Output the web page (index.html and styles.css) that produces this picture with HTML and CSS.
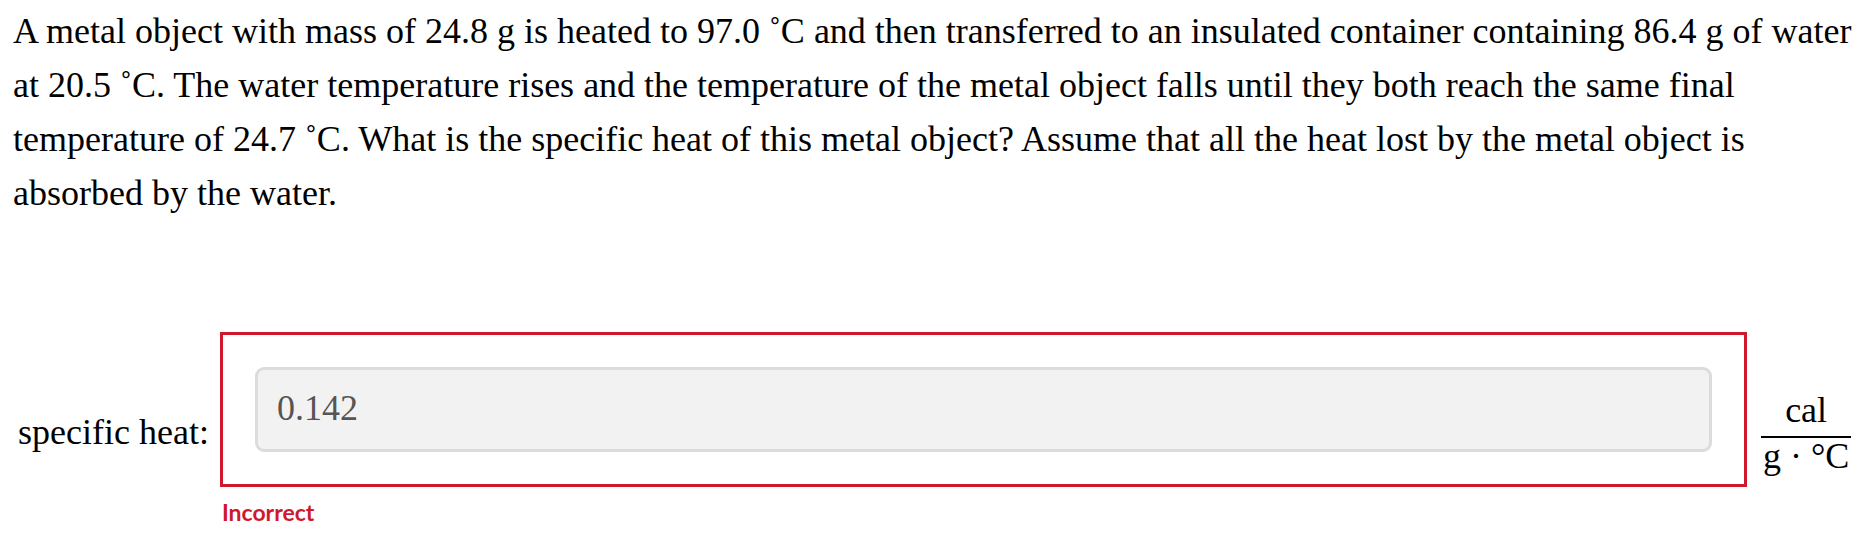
FILE: index.html
```html
<!DOCTYPE html>
<html lang="en">
<head>
<meta charset="utf-8">
<title>Specific heat</title>
<link rel="stylesheet" href="styles.css">
</head>
<body>
<div class="page">
  <p class="question">A metal object with mass of 24.8 g is heated to 97.0 ˚C and then transferred to an insulated container containing 86.4 g of water at 20.5 ˚C. The water temperature rises and the temperature of the metal object falls until they both reach the same final temperature of 24.7 ˚C. What is the specific heat of this metal object? Assume that all the heat lost by the metal object is absorbed by the water.</p>
  <div class="answer-row">
    <div class="label">specific heat:</div>
    <div class="answer-col">
      <div class="answer-box">
        <div class="field">0.142</div>
      </div>
      <div class="feedback">Incorrect</div>
    </div>
    <div class="frac">
      <div class="num">cal</div>
      <div class="bar"></div>
      <div class="den">g · °C</div>
    </div>
  </div>
</div>
</body>
</html>
```
FILE: styles.css
```css
html, body {
  margin: 0;
  padding: 0;
  background: #ffffff;
}

.page {
  font-family: "Liberation Serif", "Times New Roman", serif;
  font-size: 36px;
  color: #000000;
  padding: 4px 4px 0 13px;
}

.question {
  margin: 0;
  line-height: 54px;
}

.answer-row {
  display: flex;
  align-items: flex-start;
  margin-top: 112px;
}

.label {
  margin-left: 5px;
  margin-top: 73px;
  line-height: 54px;
  white-space: nowrap;
}

.answer-col {
  margin-left: 11px;
  display: flex;
  flex-direction: column;
}

.answer-box {
  width: 1527px;
  box-sizing: border-box;
  border: 3px solid #d0182c;
  padding: 32px;
}

.field {
  height: 85px;
  box-sizing: border-box;
  border: 3px solid #dcdcdc;
  border-radius: 9px;
  background: #f2f2f2;
  color: #555555;
  line-height: 76px;
  padding: 0 19px 3px;
}

.feedback {
  font-family: Lato, "Open Sans", sans-serif;
  font-weight: 700;
  font-size: 23px;
  line-height: 26px;
  color: #d0182c;
  margin-top: 12px;
  margin-left: 2px;
}

.frac {
  margin-left: 14px;
  margin-top: 60px;
  display: flex;
  flex-direction: column;
  align-items: center;
}

.num {
  line-height: 36px;
  padding-bottom: 8px;
}

.bar {
  align-self: stretch;
  height: 2px;
  background: #000000;
}

.den {
  line-height: 36px;
  padding: 0 2px;
  white-space: nowrap;
}
```
